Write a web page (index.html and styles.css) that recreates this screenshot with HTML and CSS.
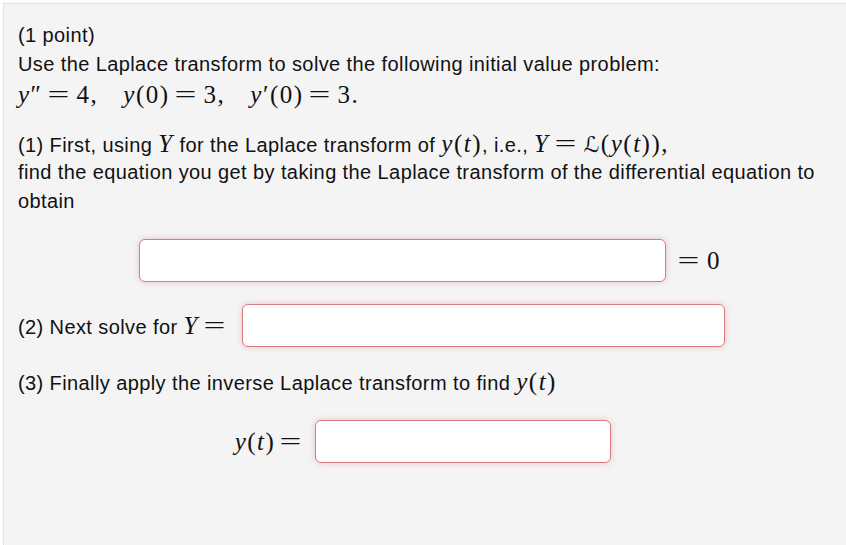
FILE: index.html
```html
<!DOCTYPE html>
<html>
<head>
<meta charset="utf-8">
<link rel="stylesheet" href="styles.css">
</head>
<body>
<div class="panel">
  <p class="line">(1 point)</p>
  <p class="line">Use the Laplace transform to solve the following initial value problem:</p>
  <p class="line mathline"><span class="m"><i>y</i>″<span class="rel">=</span>4,</span><span class="quad"></span><span class="m"><i>y</i>(0)<span class="rel">=</span>3,</span><span class="quad"></span><span class="m"><i>y</i>′(0)<span class="rel">=</span>3.</span></p>

  <div class="part">
    <p class="line">(1) First, using <span class="m"><i>Y</i></span> for the Laplace transform of <span class="m"><i>y</i>(<i>t</i>)</span>, i.e., <span class="m"><i>Y</i><span class="rel">=</span><span class="cal">ℒ</span>(<i>y</i>(<i>t</i>)),</span></p>
    <p class="line">find the equation you get by taking the Laplace transform of the differential equation to</p>
    <p class="line">obtain</p>
  </div>

  <div class="row row1">
    <div class="box box1"></div>
    <span class="m eq0"><span class="rel">=</span>0</span>
  </div>

  <div class="row2">
    <span class="label">(2) Next solve for <span class="m"><i>Y</i><span class="rel">=</span></span></span>
    <div class="box box2"></div>
  </div>

  <p class="line part3">(3) Finally apply the inverse Laplace transform to find <span class="m"><i>y</i>(<i>t</i>)</span></p>

  <div class="row row3">
    <span class="m"><i>y</i>(<i>t</i>)<span class="rel">=</span></span>
    <div class="box box3"></div>
  </div>
</div>
</body>
</html>
```

FILE: styles.css
```css
html, body {
  margin: 0;
  padding: 0;
  background: #ffffff;
}
body {
  font-family: "Liberation Sans", Arial, sans-serif;
  font-size: 20px;
  letter-spacing: 0.4px;
  color: #111;
  overflow: hidden;
  height: 545px;
}
.panel {
  box-sizing: border-box;
  margin: 3px 0 0 3px;
  height: 542px;
  background: #f4f4f4;
  border-top: 1px solid #e3e3e3;
  border-left: 1px solid #e3e3e3;
  padding: 17px 14px 0 14px;
  box-shadow: 0 -1px 2px rgba(0,0,0,0.04);
}
.line {
  margin: 0;
  height: 29px;
  line-height: 29px;
  white-space: nowrap;
}
.mathline {
  height: 31px;
  line-height: 31px;
}
.m {
  font-family: "Liberation Serif", "Times New Roman", serif;
  font-size: 25px;
  letter-spacing: 1.5px;
}
.m i {
  font-style: italic;
}
.rel {
  display: inline-block;
  box-sizing: border-box;
  width: 34px;
  padding-right: 2px;
  text-align: center;
  letter-spacing: 0;
  transform: scaleX(1.55);
}
.cal {
  font-family: "DejaVu Sans", sans-serif;
  font-size: 22px;
}
.quad {
  display: inline-block;
  width: 25px;
}
.part {
  margin-top: 19px;
}
.row {
  display: flex;
  align-items: center;
  justify-content: center;
}
.row1 {
  margin-top: 23px;
  padding-left: 10px;
}
.eq0 {
  margin-left: 7px;
}
.box {
  box-sizing: border-box;
  background: #fff;
  border: 1px solid #d97a7e;
  border-radius: 6px;
  box-shadow: 0 0 6px rgba(200, 60, 70, 0.25);
  height: 43px;
}
.box1 { width: 527px; }
.box2 { width: 483px; margin-left: 9px; }
.box3 { width: 296px; margin-left: 6px; }
.row2 {
  display: flex;
  align-items: center;
  margin-top: 22px;
}
.part3 {
  margin-top: 20px;
}
.row3 {
  margin-top: 24px;
  padding-right: 4px;
}
```
